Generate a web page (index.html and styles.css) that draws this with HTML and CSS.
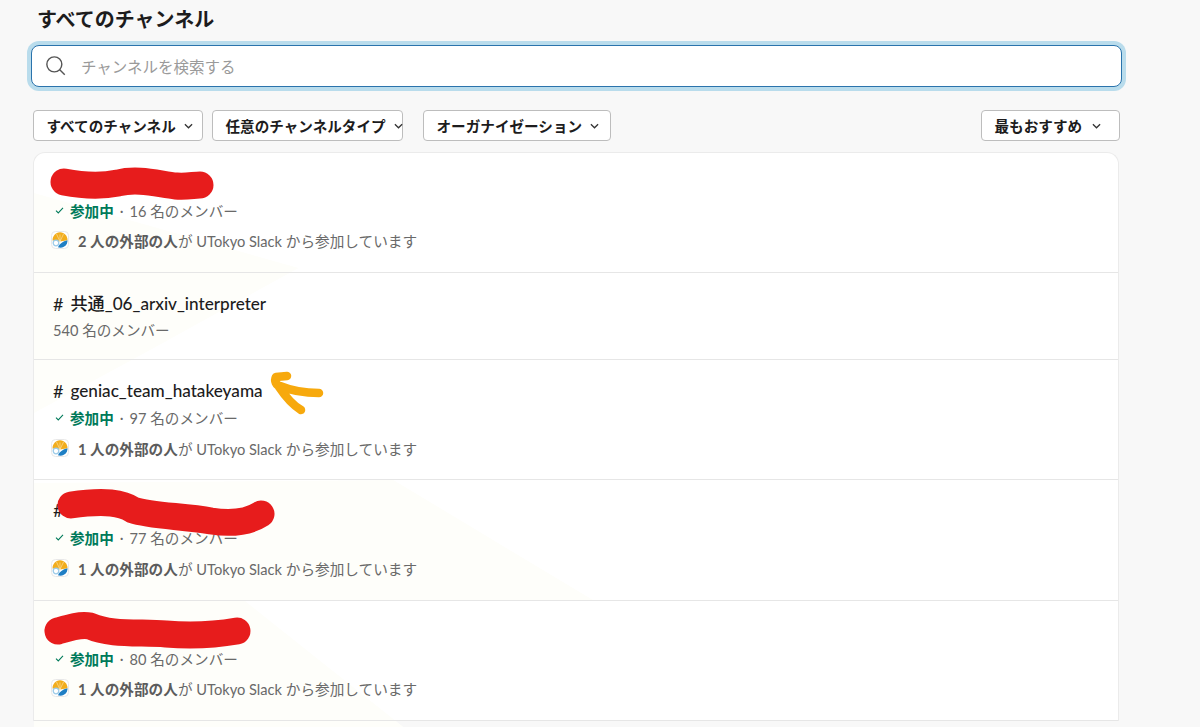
FILE: index.html
```html
<!DOCTYPE html>
<html lang="ja">
<head>
<meta charset="utf-8">
<title>すべてのチャンネル</title>
<link rel="stylesheet" href="styles.css">
</head>
<body>
<main class="page">
  <h1 class="title">すべてのチャンネル</h1>
  <div class="search">
    <svg class="search-icon" viewBox="0 0 24 24" aria-hidden="true"><circle cx="10" cy="10" r="9"/><path d="M16.500 16.500l6 6"/></svg>
    <span class="placeholder">チャンネルを検索する</span>
  </div>
  <div class="filters">
    <button class="filter f1">すべてのチャンネル<svg class="chev" viewBox="0 0 10 6"><path d="M1 1l4 4 4-4"/></svg></button>
    <button class="filter f2">任意のチャンネルタイプ<svg class="chev" viewBox="0 0 10 6"><path d="M1 1l4 4 4-4"/></svg></button>
    <button class="filter f3">オーガナイゼーション<svg class="chev" viewBox="0 0 10 6"><path d="M1 1l4 4 4-4"/></svg></button>
    <button class="filter sort">最もおすすめ<svg class="chev" viewBox="0 0 10 6"><path d="M1 1l4 4 4-4"/></svg></button>
  </div>
  <section class="list">
    <svg class="tint" viewBox="0 0 1086 574" preserveAspectRatio="none" aria-hidden="true"><path d="M0 40L265 115 120 195 0 260Z M0 330L360 327 560 447H210L370 574H0Z"/></svg>
    <article class="row r1">
      <div class="name"><span class="hash">#</span></div>
      <div class="meta"><svg class="check" viewBox="0 0 10 8"><path d="M1 4.2l2.6 2.6L9 1"/></svg><b class="joined">参加中</b><span class="dot">·</span>16 名のメンバー</div>
      <div class="ext"><svg class="org" viewBox="0 0 18 18"><use href="#utokyo"/></svg><span><b>2 人の外部の人</b>が UTokyo Slack から参加しています</span></div>
    </article>
    <article class="row r2">
      <div class="name"><span class="hash">#</span>共通_06_arxiv_interpreter</div>
      <div class="meta plain">540 名のメンバー</div>
    </article>
    <article class="row r3">
      <div class="name"><span class="hash">#</span>geniac_team_hatakeyama</div>
      <div class="meta"><svg class="check" viewBox="0 0 10 8"><path d="M1 4.2l2.6 2.6L9 1"/></svg><b class="joined">参加中</b><span class="dot">·</span>97 名のメンバー</div>
      <div class="ext"><svg class="org" viewBox="0 0 18 18"><use href="#utokyo"/></svg><span><b>1 人の外部の人</b>が UTokyo Slack から参加しています</span></div>
    </article>
    <article class="row r4">
      <div class="name"><span class="hash">#</span></div>
      <div class="meta"><svg class="check" viewBox="0 0 10 8"><path d="M1 4.2l2.6 2.6L9 1"/></svg><b class="joined">参加中</b><span class="dot">·</span>77 名のメンバー</div>
      <div class="ext"><svg class="org" viewBox="0 0 18 18"><use href="#utokyo"/></svg><span><b>1 人の外部の人</b>が UTokyo Slack から参加しています</span></div>
    </article>
    <article class="row r5">
      <div class="name"><span class="hash">#</span></div>
      <div class="meta"><svg class="check" viewBox="0 0 10 8"><path d="M1 4.2l2.6 2.6L9 1"/></svg><b class="joined">参加中</b><span class="dot">·</span>80 名のメンバー</div>
      <div class="ext"><svg class="org" viewBox="0 0 18 18"><use href="#utokyo"/></svg><span><b>1 人の外部の人</b>が UTokyo Slack から参加しています</span></div>
    </article>
  </section>
</main>

<svg class="defs" aria-hidden="true">
  <symbol id="utokyo" viewBox="0 0 18 18">
    <rect x=".5" y=".5" width="17" height="17" rx="4" fill="#fff" stroke="#e8e8e8"/>
    <path d="M9 10.500L1.500 9.500C1.500 5 4.500 1.500 9 1.300c4.500.2 7.500 3.500 7.500 8z" fill="#f2ad1c"/>
    <path d="M9 3.500v7M5.500 3L9 10.500M12.500 3L9 10.500" stroke="#fff" stroke-width=".4"/>
    <path d="M16.500 9.300c0 4.200-2.700 7.200-7 7.400-1 0-1.900-.2-2.600-.5C8.500 13 11.500 10.300 16.500 9.300z" fill="#1f7fc4"/>
    <circle cx="5" cy="12" r="2.800" fill="#fff" stroke="#9ccbe8" stroke-width="1.300"/>
  </symbol>
</svg>

<svg class="marks" viewBox="0 0 1200 727" aria-hidden="true">
  <g class="red">
    <path d="M64 182c16 3 34 5 54 1 20-5 40 1 58 3 10 1 18-1 24-1"/>
    <path d="M71 505c14-2 28-3 40-2 10 1 16 3 22 7 18 6 50 6 78 11 20 3 36 2 50-7"/>
    <path d="M58 631c10-3 22-7 32-5 20 9 48 6 76 8 24 2 48 1 71-3"/>
  </g>
  <path class="orange" d="M287 376l-11 1c-2 4 0 8 4 9 12 5 24 7 39 7M279 387c6 9 12 17 22 23"/>
</svg>
</body>
</html>
```
FILE: styles.css
```css
* { box-sizing: border-box; }
html, body { margin: 0; height: 727px; overflow: hidden; }
body {
  background: #f8f8f8;
  color: #1d1c1d;
  font-family: Lato, "Noto Sans CJK JP", sans-serif;
  position: relative;
}
.page { padding: 8px 80px 0 33px; display: flex; flex-direction: column; }
.title { margin: 0 0 0 4px; font-size: 20px; line-height: 22px; font-weight: 700; }
.search {
  margin: 15px -2px 0 -2px;
  height: 42px;
  background: #fff;
  border: 1.5px solid #2a73ac;
  border-radius: 8px;
  box-shadow: 0 0 0 4px #b9dcec;
  display: flex;
  align-items: center;
  padding-left: 14px;
  gap: 15px;
}
.search-icon { width: 20px; height: 20px; fill: none; stroke: #555; stroke-width: 1.7; flex: none; }
.placeholder { font-size: 15.500px; color: #9a9a9a; }
.filters { margin-top: 23px; display: flex; height: 31px; gap: 9px; }
.filter {
  font: 700 14.600px Lato, "Noto Sans CJK JP", sans-serif;
  color: #1d1c1d;
  background: #fff;
  border: 1px solid #bdbdbd;
  border-radius: 4px;
  padding: 0 0 0 12.500px;
  display: flex;
  align-items: center;
  gap: 8px;
  height: 31px;
  white-space: nowrap;
}
.f1 { width: 170px; }
.f2 { width: 191px; }
.f3 { width: 188px; margin-left: 11px; }
.sort { width: 139px; margin-left: auto; gap: 10px; }
.chev { width: 9px; height: 6px; flex: none; fill: none; stroke: #333; stroke-width: 1.4; }
.list {
  margin-top: 11px;
  background: #fff;
  border: 1px solid #ebebeb;
  border-bottom: 0;
  border-radius: 12px 12px 0 0;
  position: relative;
  margin-right: 1px;
}
.tint { position: absolute; left: 0; top: 0; width: 100%; height: 574px; fill: #fefefa; }
.row {
  position: relative;
  height: 120px;
  padding: 0 19px;
  border-bottom: 1px solid #e6e6e6;
}
.r2 { height: 87px; }
.r4 { height: 121px; }
.name { font-size: 17.150px; font-weight: 500; line-height: 20px; padding-top: 20px; height: 40px; display: flex; }
.r2 .name { padding-top: 21px; height: 41px; }
.r3 .name { padding-top: 21px; height: 41px; }
.hash { margin-right: 7px; font-size: 18px; font-weight: 400; }
.meta { display: flex; align-items: center; font-size: 14.600px; color: #696969; height: 18px; margin-top: 8px; }
.r2 .meta { margin-top: 6px; }
.r3 .meta { margin-top: 7px; }
.meta.plain { color: #696969; }
.check { width: 9px; height: 7px; margin: 0 6px 0 2px; fill: none; stroke: #007a5a; stroke-width: 1.2; }
.joined { color: #007a5a; font-weight: 700; }
.dot { margin: 0 6px; }
.ext { display: flex; align-items: center; gap: 9px; height: 20px; margin-top: 12px; font-size: 14.650px; color: #696969; margin-left: -2px; }
.r1 .ext, .r5 .ext { margin-top: 11px; }
.ext b { font-weight: 700; color: #5c5c5c; }
.org { width: 18px; height: 18px; flex: none; }
.defs { position: absolute; width: 0; height: 0; }
.marks { position: absolute; left: 0; top: 0; width: 1200px; height: 727px; pointer-events: none; fill: none; stroke-linecap: round; stroke-linejoin: round; }
.red { stroke: #e71c1c; stroke-width: 27; }
.orange { stroke: #f7a90d; stroke-width: 8.500; }
```
